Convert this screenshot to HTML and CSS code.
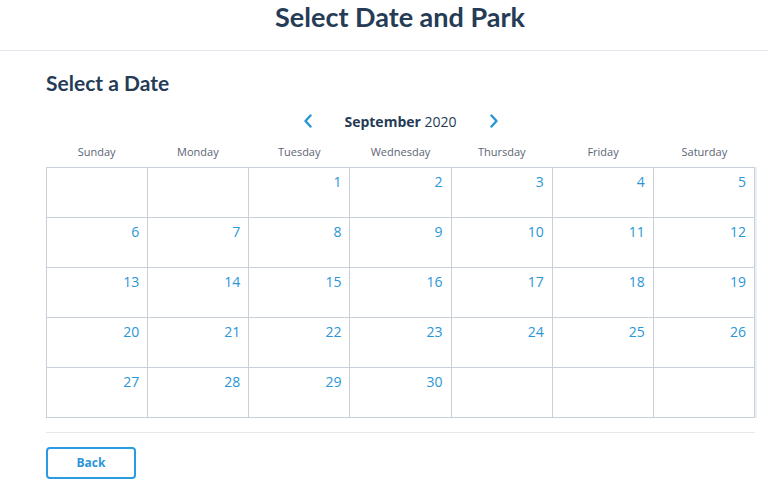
FILE: index.html
```html
<!DOCTYPE html>
<html lang="en">

<head>
    <meta charset="UTF-8">
    <title>Select Date and Park</title>
    <link rel="stylesheet" href="styles.css">
</head>

<body>
    <div class="site-header">
        <h1>Select Date and Park</h1>
    </div>

    <div class="page">
        <h2 class="section-title">Select a Date</h2>

        <div class="month-nav">
            <a href="javascript:;" class="nav-arrow">
                <svg width="10" height="14" viewBox="0 0 10 14"><path d="M7.5 1.5 L2.5 7 L7.5 12.5" fill="none" stroke="currentColor" stroke-width="2.4" stroke-linecap="round" stroke-linejoin="round"/></svg>
            </a>
            <div class="month-label"><b>September</b> 2020</div>
            <a href="javascript:;" class="nav-arrow">
                <svg width="10" height="14" viewBox="0 0 10 14"><path d="M2.5 1.5 L7.5 7 L2.5 12.5" fill="none" stroke="currentColor" stroke-width="2.4" stroke-linecap="round" stroke-linejoin="round"/></svg>
            </a>
        </div>

        <div class="weekdays">
            <div>Sunday</div>
            <div>Monday</div>
            <div>Tuesday</div>
            <div>Wednesday</div>
            <div>Thursday</div>
            <div>Friday</div>
            <div>Saturday</div>
        </div>

        <div class="calendar" id="calendar"></div>

        <div class="divider"></div>

        <a href="javascript:;" class="back-btn">Back</a>
    </div>

    <script>
        // september 2020 starts on a tuesday
        var calendar = document.getElementById('calendar');
        var offset = 2;
        var days = 30;
        for (var i = 0; i < 35; i++) {
            var cell = document.createElement('div');
            cell.className = 'day';
            var n = i - offset + 1;
            if (n >= 1 && n <= days) {
                cell.innerHTML = '<a href="javascript:;">' + n + '</a>';
            }
            calendar.appendChild(cell);
        }
    </script>
</body>

</html>
```

FILE: styles.css
```css
* {
    padding: 0;
    margin: 0;
    box-sizing: border-box;
}

body {
    font-family: "Open Sans", "Liberation Sans", sans-serif;
    background: #fff;
    color: #253b56;
}

a {
    text-decoration: none;
}

.site-header {
    height: 51px;
    border-bottom: 1px solid #e6e7ee;
    padding-left: 32px;
    text-align: center;
}

.site-header h1 {
    font-family: Lato, "Open Sans", sans-serif;
    font-weight: 700;
    font-size: 27px;
    line-height: 33px;
    color: #253b56;
}

.page {
    width: 709px;
    margin-left: 46px;
}

.section-title {
    margin-top: 20px;
    font-family: Lato, "Open Sans", sans-serif;
    font-weight: 700;
    font-size: 21px;
    line-height: 24px;
    color: #253b56;
}

.month-nav {
    display: flex;
    justify-content: center;
    align-items: center;
    height: 24px;
    margin-top: 14px;
}

.nav-arrow {
    display: flex;
    align-items: center;
    justify-content: center;
    width: 20px;
    height: 24px;
    color: #2a96d6;
}

.month-label {
    width: 166px;
    text-align: center;
    font-size: 14px;
    color: #253b56;
}

.month-label b {
    font-weight: 700;
}

.weekdays {
    display: grid;
    grid-template-columns: repeat(7, 1fr);
    height: 34px;
    align-items: end;
    padding-bottom: 7px;
}

.weekdays div {
    text-align: center;
    font-size: 11px;
    line-height: 17px;
    color: #5b6474;
}

.calendar {
    display: grid;
    grid-template-columns: repeat(7, 1fr);
    border-left: 1px solid #c9d0da;
    border-top: 1px solid #c9d0da;
    box-shadow: 2px 0 0 #eceff3;
}

.day {
    height: 50px;
    border-right: 1px solid #c9d0da;
    border-bottom: 1px solid #c9d0da;
    padding: 2px 8px 0 0;
    text-align: right;
}

.day a {
    font-size: 14px;
    line-height: 20px;
    color: #2a96d6;
}

.divider {
    height: 1px;
    margin-top: 14px;
    background: #e6e8ec;
}

.back-btn {
    display: block;
    width: 90px;
    height: 32px;
    margin-top: 14px;
    border: 2px solid #2a9be0;
    border-radius: 4px;
    text-align: center;
    line-height: 28px;
    font-size: 12px;
    font-weight: 700;
    color: #2a96d6;
}
```
